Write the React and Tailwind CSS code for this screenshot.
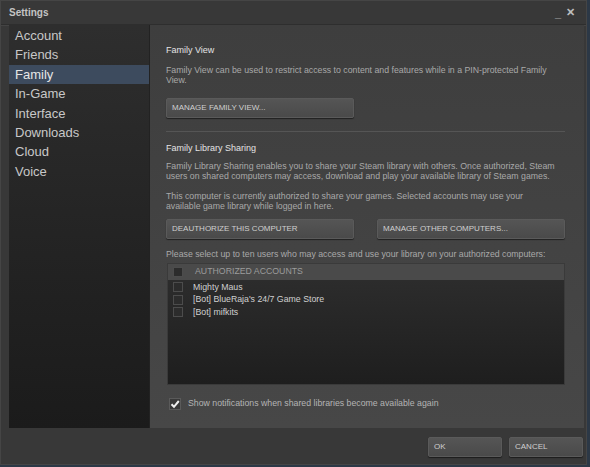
import React from "react";

const font = { fontFamily: '"Liberation Sans", Arial, sans-serif' };

function Btn({ children, className = "" }) {
  return (
    <div
      className={
        "flex items-center h-[20px] px-[5px] rounded-[2px] border border-[#5a5a5a] bg-gradient-to-b from-[#555555] to-[#4a4a4a] text-[8px] text-[#cfcfcf] shadow-[0_1px_1px_rgba(0,0,0,0.5)] " +
        className
      }
    >
      {children}
    </div>
  );
}

function Box({ checked }) {
  return (
    <div className="w-[10px] h-[10px] border border-[#4c4c4c] bg-[#2c2c2c] flex items-center justify-center">
      {checked && (
        <svg width="10" height="10" viewBox="0 0 10 10">
          <path d="M1.5 5.2 L4 7.8 L8.8 2" stroke="#f0f0f0" strokeWidth="2" fill="none" />
        </svg>
      )}
    </div>
  );
}

export default function App() {
  const items = ["Account", "Friends", "Family", "In-Game", "Interface", "Downloads", "Cloud", "Voice"];
  return (
    <div style={font} className="w-[590px] h-[467px] bg-[#2c3846] overflow-hidden">
      <div className="w-[587px] h-[465px] bg-[#383838] border border-[#454545] flex flex-col">
        <div className="h-[24px] flex items-center px-[8px] border-b border-[#2e2e2e] shadow-[0_1px_0_#444]">
          <div className="text-[10px] font-bold text-[#c4c4c4] flex-1">Settings</div>
          <div className="flex items-center gap-[5px] text-[#bdbdbd] pr-[3px]">
            <span className="text-[11px] font-bold leading-none mt-[2px]">_</span>
            <span className="text-[11px] font-bold leading-none">✕</span>
          </div>
        </div>
        <div className="flex flex-1 pl-[8px] pr-[2px]">
          <div className="w-[141px] bg-gradient-to-b from-[#2e2e2e] to-[#1b1b1b] border-r border-[#222] pt-[1px] flex flex-col">
            {items.map((t) => (
              <div
                key={t}
                className={
                  "h-[19.4px] flex items-center pl-[6px] text-[13px] text-[#c8c8c8] " +
                  (t === "Family" ? "bg-[#3d4b5e] text-[#e6e6e6]" : "")
                }
              >
                {t}
              </div>
            ))}
          </div>
          <div className="flex-1 bg-gradient-to-b from-[#3e3e3e] to-[#474747] pl-[16px] pr-[19px] pt-[20px] text-[8.75px] text-[#a9a9a9] flex flex-col">
            <div className="text-[#e4e4e4] text-[9px] leading-[11px]">Family View</div>
            <div className="mt-[9px] leading-[10px] pr-[10px]">
              Family View can be used to restrict access to content and features while in a PIN-protected Family View.
            </div>
            <Btn className="w-[188px] mt-[13px]">MANAGE FAMILY VIEW...</Btn>
            <div className="h-px bg-[#555] mt-[13px]" />
            <div className="text-[#e4e4e4] text-[9px] leading-[11px] mt-[11px]">Family Library Sharing</div>
            <div className="mt-[8px] leading-[9.5px]">
              Family Library Sharing enables you to share your Steam library with others. Once authorized, Steam users on shared computers may access, download and play your available library of Steam games.
            </div>
            <div className="mt-[10px] leading-[10px] pr-[40px]">
              This computer is currently authorized to share your games. Selected accounts may use your available game library while logged in here.
            </div>
            <div className="flex justify-between mt-[8px]">
              <Btn className="w-[188px]">DEAUTHORIZE THIS COMPUTER</Btn>
              <Btn className="w-[188px]">MANAGE OTHER COMPUTERS...</Btn>
            </div>
            <div className="mt-[10px] leading-[11px]">
              Please select up to ten users who may access and use your library on your authorized computers:
            </div>
            <div className="mt-[3px] h-[122px] ml-[1px] flex flex-col border border-[#3a3a3a]">
              <div className="h-[16px] bg-[#4a4a4a] flex items-center pl-[5px] gap-[12px] text-[#9c9c9c]">
                <Box />
                <span>AUTHORIZED ACCOUNTS</span>
              </div>
              <div className="flex-1 bg-gradient-to-b from-[#2c2c2c] to-[#1e1e1e] pt-[1px] pl-[5px] text-[#d0d0d0]">
                {["Mighty Maus", "[Bot] BlueRaja's 24/7 Game Store", "[Bot] mifkits"].map((n) => (
                  <div key={n} className="h-[12.5px] flex items-center gap-[10px]">
                    <Box />
                    <span>{n}</span>
                  </div>
                ))}
              </div>
            </div>
            <div className="flex items-center gap-[7px] mt-[12px] ml-[3px]">
              <div className="w-[12px] h-[12px] border border-[#5a5a5a] bg-[#3a3a3a] flex items-center justify-center">
                <svg width="10" height="10" viewBox="0 0 10 10">
                  <path d="M1.5 5.2 L4 7.8 L8.8 2" stroke="#f0f0f0" strokeWidth="2" fill="none" />
                </svg>
              </div>
              <span className="text-[#b4b4b4]">Show notifications when shared libraries become available again</span>
            </div>
          </div>
        </div>
        <div className="h-[36px] flex items-center justify-end gap-[7px] pr-[3px] pt-[2px]">
          <Btn className="w-[74px]">OK</Btn>
          <Btn className="w-[74px]">CANCEL</Btn>
        </div>
      </div>
    </div>
  );
}
